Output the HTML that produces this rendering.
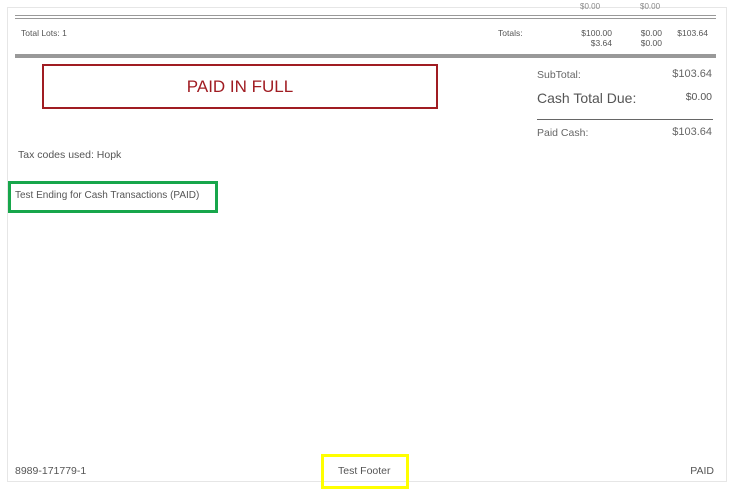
<!DOCTYPE html>
<html><head><style>
body{margin:0;width:730px;height:497px;background:#fff;font-family:"Liberation Sans",sans-serif;color:#444;position:relative;overflow:hidden}
.a{position:absolute;white-space:nowrap}
.s{font-size:8.5px;color:#555}
.r{text-align:right}
</style></head><body>
<div class="a" style="left:7px;top:7px;width:718px;height:473px;border:1px solid #e6e6e6"></div>
<div class="a s" style="left:580px;top:2px;font-size:8px;color:#888">$0.00</div>
<div class="a s" style="left:640px;top:2px;font-size:8px;color:#888">$0.00</div>
<div class="a" style="left:15px;top:15px;width:701px;height:1px;background:#999"></div>
<div class="a" style="left:15px;top:18px;width:701px;height:1px;background:#999"></div>
<div class="a s" style="left:21px;top:28px">Total Lots: 1</div>
<div class="a s" style="left:498px;top:28px">Totals:</div>
<div class="a s r" style="left:572px;top:28px;width:40px">$100.00<br>$3.64</div>
<div class="a s r" style="left:632px;top:28px;width:30px">$0.00<br>$0.00</div>
<div class="a s r" style="left:668px;top:28px;width:40px">$103.64</div>
<div class="a" style="left:15px;top:54px;width:701px;height:4px;background:#999"></div>
<div class="a" style="left:42px;top:64px;width:392px;height:41px;border:2px solid #a01c22;color:#a01c22;font-size:17px;text-align:center;line-height:41px">PAID IN FULL</div>
<div class="a" style="left:537px;top:69px;font-size:10.5px;color:#666">SubTotal:</div>
<div class="a r" style="left:652px;top:68px;width:60px;font-size:11px;color:#666">$103.64</div>
<div class="a" style="left:537px;top:90px;font-size:14px;color:#555">Cash Total Due:</div>
<div class="a r" style="left:652px;top:91px;width:60px;font-size:10.5px;color:#555">$0.00</div>
<div class="a" style="left:537px;top:119px;width:176px;height:1px;background:#666"></div>
<div class="a" style="left:537px;top:127px;font-size:10.5px;color:#666">Paid Cash:</div>
<div class="a r" style="left:652px;top:126px;width:60px;font-size:11px;color:#666">$103.64</div>
<div class="a" style="left:18px;top:149px;font-size:10.5px;color:#555">Tax codes used: Hopk</div>
<div class="a" style="left:8px;top:181px;width:204px;height:26px;border:3px solid #17a64b"></div>
<div class="a" style="left:15px;top:190px;font-size:10px;color:#555">Test Ending for Cash Transactions (PAID)</div>
<div class="a" style="left:15px;top:465px;font-size:10.5px;color:#555">8989-171779-1</div>
<div class="a" style="left:321px;top:454px;width:82px;height:29px;border:3px solid #ffff00"></div>
<div class="a" style="left:338px;top:465px;font-size:10.5px;color:#555">Test Footer</div>
<div class="a r" style="left:670px;top:465px;width:44px;font-size:10.5px;color:#555">PAID</div>
</body></html>
